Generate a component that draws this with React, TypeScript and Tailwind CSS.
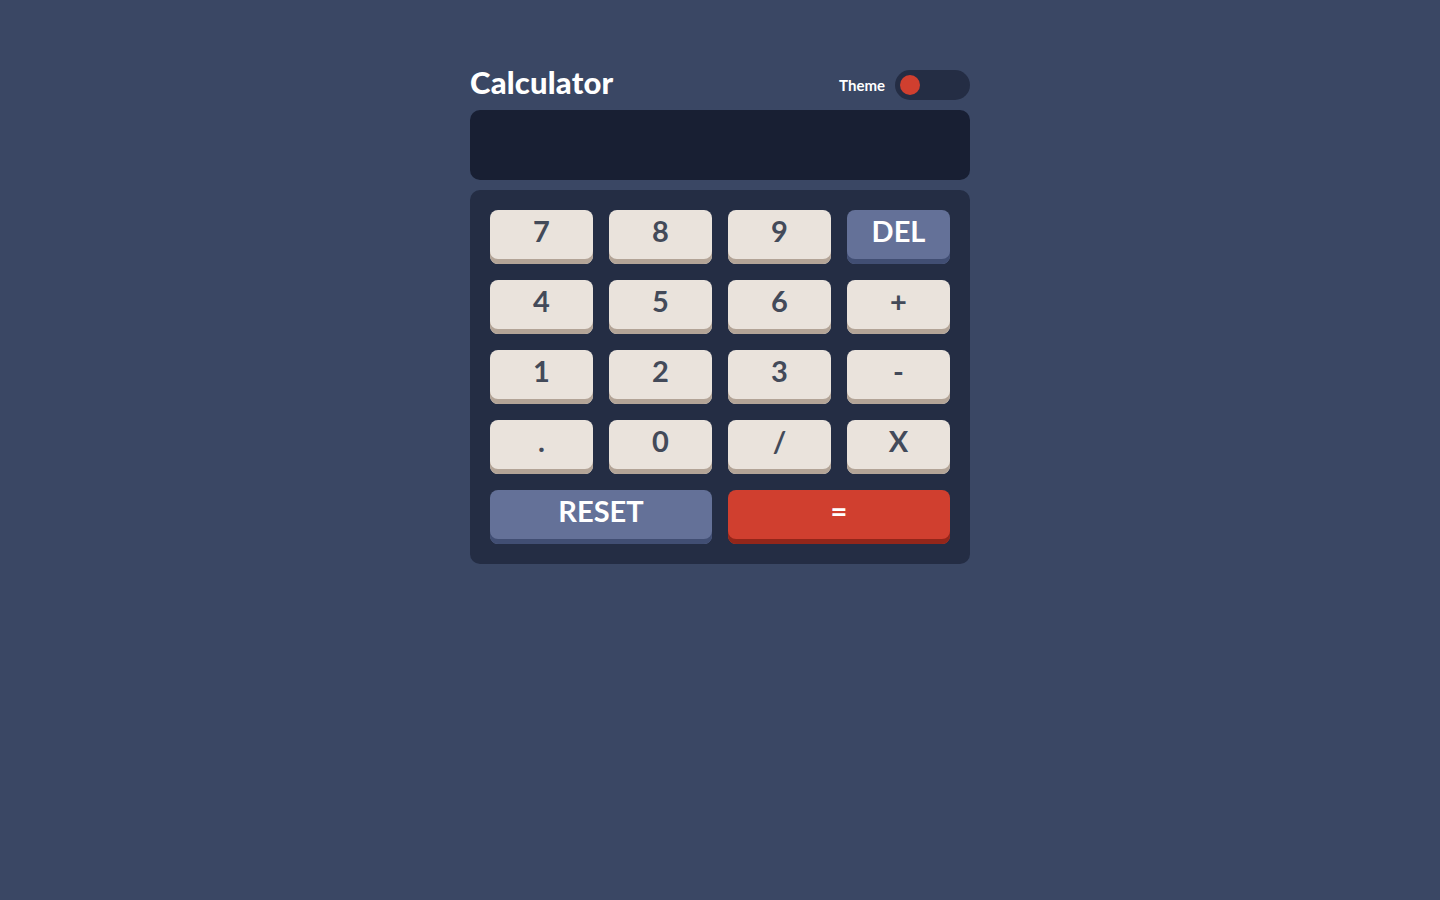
import React from 'react'

type Key = { label: string; kind?: 'num' | 'del' | 'eq'; wide?: boolean }

const keys: Key[] = [
  { label: '7' }, { label: '8' }, { label: '9' }, { label: 'DEL', kind: 'del' },
  { label: '4' }, { label: '5' }, { label: '6' }, { label: '+' },
  { label: '1' }, { label: '2' }, { label: '3' }, { label: '-' },
  { label: '.' }, { label: '0' }, { label: '/' }, { label: 'X' },
  { label: 'RESET', kind: 'del', wide: true }, { label: '=', kind: 'eq', wide: true },
]

function KeyButton({ k }: { k: Key }) {
  const tone =
    k.kind === 'del'
      ? 'bg-[#647198] text-white shadow-[inset_0_-5px_0_#414e73]'
      : k.kind === 'eq'
        ? 'bg-[#d03f2f] text-white shadow-[inset_0_-5px_0_#93261a]'
        : 'bg-[#eae3dc] text-[#434a59] shadow-[inset_0_-5px_0_#b3a497]'
  return (
    <button
      className={`flex h-[54px] items-start justify-center rounded-[8px] pt-[3px] text-[29px] font-bold leading-[36px] ${tone} ${k.wide ? 'col-span-2' : ''}`}
    >
      {k.label}
    </button>
  )
}

export default function App() {
  return (
    <main
      className="min-h-screen bg-[#3a4764] pt-[64px]"
      style={{ fontFamily: 'Lato, "Open Sans", sans-serif' }}
    >
      <section className="mx-auto flex w-[500px] flex-col">
        <header className="flex h-[36px] items-center justify-between">
          <h1 className="text-[31px] font-black leading-none tracking-[0.2px] text-white">Calculator</h1>
          <div className="mt-[6px] flex items-center gap-[10px]">
            <span className="text-[15px] font-bold text-white">Theme</span>
            <div className="flex h-[30px] w-[75px] items-center rounded-full bg-[#242d44] px-[5px]">
              <span className="h-[20px] w-[20px] rounded-full bg-[#d03f2f]" />
            </div>
          </div>
        </header>

        <div className="mt-[10px] h-[70px] rounded-[10px] bg-[#181f33]" />

        <div className="mt-[10px] grid grid-cols-4 gap-x-[16px] gap-y-[16px] rounded-[10px] bg-[#242d44] p-[20px]">
          {keys.map((k) => (
            <KeyButton key={k.label} k={k} />
          ))}
        </div>
      </section>
    </main>
  )
}
